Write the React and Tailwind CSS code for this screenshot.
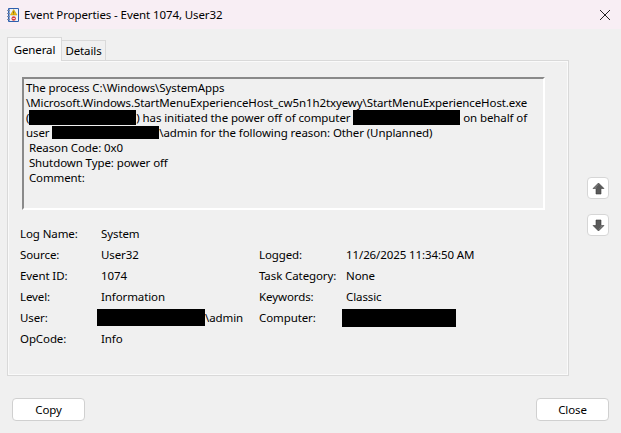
import React from "react";

const Redact = ({ w, h = 16, className = "" }) => (
  <span className={`inline-block bg-black align-middle shrink-0 ${className}`} style={{ width: w, height: h }} />
);

const EventIcon = () => (
  <svg width="16" height="16" viewBox="0 0 16 16">
    <rect x="3" y="1" width="11" height="14" rx="1" fill="#2f5fae" />
    <rect x="4.5" y="2" width="8.5" height="12" fill="#eef3fb" />
    <g fill="#7b8aa6">
      <rect x="2" y="3" width="3" height="1" />
      <rect x="2" y="6" width="3" height="1" />
      <rect x="2" y="9" width="3" height="1" />
      <rect x="2" y="12" width="3" height="1" />
    </g>
    <path d="M8.7 2.5 L12 8 L5.4 8 Z" fill="#f4c20d" stroke="#b88a00" strokeWidth="0.5" />
    <rect x="8.4" y="4.3" width="0.7" height="2" fill="#333" />
    <rect x="8.4" y="6.7" width="0.7" height="0.7" fill="#333" />
    <circle cx="8.7" cy="11.5" r="2.2" fill="#d83b3b" />
    <rect x="7.5" y="11.1" width="2.4" height="0.8" fill="#fff" />
  </svg>
);

const ArrowButton = ({ down }) => (
  <button className="w-[22px] h-[22px] bg-white border border-[#d6d6d6] rounded-[4px] flex items-center justify-center">
    <svg width="13" height="13" viewBox="0 0 13 13" className={down ? "rotate-180" : ""}>
      <path d="M6.5 1 L12 6.5 L9 6.5 L9 12 L4 12 L4 6.5 L1 6.5 Z" fill="#5a5a5a" stroke="#3c3c3c" strokeWidth="0.6" />
      <path d="M6.5 2.2 L2.6 6 L4.6 6" fill="none" stroke="#9a9a9a" strokeWidth="0.6" />
    </svg>
  </button>
);

const fields = [
  ["Log Name:", "System", "", ""],
  ["Source:", "User32", "Logged:", "11/26/2025 11:34:50 AM"],
  ["Event ID:", "1074", "Task Category:", "None"],
  ["Level:", "Information", "Keywords:", "Classic"],
  ["User:", "user", "Computer:", "computer"],
  ["OpCode:", "Info", "", ""],
];

export default function App() {
  return (
    <div className="w-[621px] h-[433px] bg-[#f0f0f0] flex flex-col text-[11.5px] tracking-[-0.1px] text-black font-['Noto_Sans','Open_Sans',sans-serif] overflow-hidden">
      <div className="h-[29px] bg-[#f8eef4] flex items-center pl-[5px] pr-[10px]">
        <EventIcon />
        <span className="ml-[3px]">Event Properties - Event 1074, User32</span>
        <svg className="ml-auto" width="12" height="12" viewBox="0 0 12 12">
          <path d="M1 1 L11 11 M11 1 L1 11" stroke="#222" strokeWidth="1" />
        </svg>
      </div>

      <div className="px-[7px] pt-[8px]">
        <div className="flex items-start">
          <div className="w-[562px] flex flex-col">
            <div className="flex items-end h-[23px]">
              <div className="h-[24px] w-[55px] bg-[#f9f9f9] border border-b-0 border-[#d9d9d9] flex items-center justify-center relative z-10 -mb-px">
                General
              </div>
              <div className="h-[20px] w-[44px] bg-[#f0f0f0] border border-l-0 border-b-0 border-[#d9d9d9] flex items-center justify-center">
                Details
              </div>
            </div>
            <div className="h-[316px] border border-[#d9d9d9] bg-[#f0f0f0]">
              <div className="h-full border border-[#fafafa] flex flex-col">
                <div className="ml-[13px] mt-[15px] w-[523px] h-[133px] border-2 border-t-[#8a8a8a] border-l-[#8a8a8a] border-r-white border-b-white bg-[#f0f0f0] pl-[2px] pt-[1px] leading-[15px] whitespace-nowrap">
                  <div className="h-[15px]">The process C:\Windows\SystemApps</div>
                  <div className="h-[15px]">\Microsoft.Windows.StartMenuExperienceHost_cw5n1h2txyewy\StartMenuExperienceHost.exe</div>
                  <div className="flex items-center h-[15px]">
                    <span>(</span>
                    <Redact w={107} h={15} />
                    <span>) has initiated the power off of computer&nbsp;</span>
                    <Redact w={107} h={15} />
                    <span>&nbsp;on behalf of</span>
                  </div>
                  <div className="flex items-center h-[15px]">
                    <span>user&nbsp;</span>
                    <Redact w={107} h={13} />
                    <span>\admin for the following reason: Other (Unplanned)</span>
                  </div>
                  <div className="h-[15px]">&nbsp;Reason Code: 0x0</div>
                  <div className="h-[15px]">&nbsp;Shutdown Type: power off</div>
                  <div className="h-[15px]">&nbsp;Comment:</div>
                </div>

                <div className="mt-[13px] pl-[11px] grid grid-cols-[81px_158px_87px_1fr] auto-rows-[21px] items-center whitespace-nowrap">
                  {fields.map(([l1, v1, l2, v2]) => (
                    <React.Fragment key={l1}>
                      <div>{l1}</div>
                      <div>
                        {v1 === "user" ? (
                          <div className="flex items-center -ml-[4px]">
                            <Redact w={108} h={17} />
                            <span>\admin</span>
                          </div>
                        ) : (
                          v1
                        )}
                      </div>
                      <div>{l2}</div>
                      <div>
                        {v2 === "computer" ? <Redact w={114} h={18} className="-ml-[4px]" /> : v2}
                      </div>
                    </React.Fragment>
                  ))}
                </div>
              </div>
            </div>
          </div>
          <div className="ml-[18px] mt-[140px] flex flex-col gap-[15px]">
            <ArrowButton />
            <ArrowButton down />
          </div>
        </div>

        <div className="mt-[22px] flex justify-between px-[5px]">
          <button className="w-[73px] h-[23px] bg-white border border-[#d0d0d0] rounded-[4px]">Copy</button>
          <button className="w-[73px] h-[23px] bg-white border border-[#d0d0d0] rounded-[4px]">Close</button>
        </div>
      </div>
    </div>
  );
}
